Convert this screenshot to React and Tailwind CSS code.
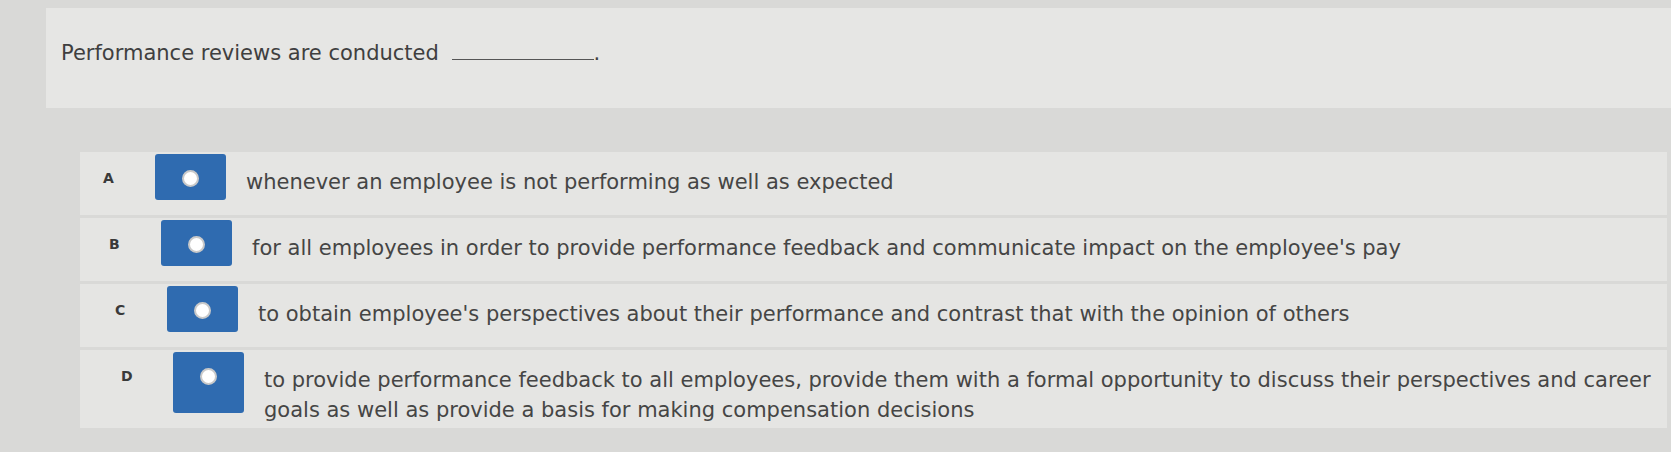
const options = [
  {
    letter: "A",
    text: "whenever an employee is not performing as well as expected",
    shift: "ml-0",
  },
  {
    letter: "B",
    text: "for all employees in order to provide performance feedback and communicate impact on the employee's pay",
    shift: "ml-[6px]",
  },
  {
    letter: "C",
    text: "to obtain employee's perspectives about their performance and contrast that with the opinion of others",
    shift: "ml-[12px]",
  },
  {
    letter: "D",
    text: "to provide performance feedback to all employees, provide them with a formal opportunity to discuss their perspectives and career goals as well as provide a basis for making compensation decisions",
    shift: "ml-[18px]",
  },
];

export default function App() {
  return (
    <div
      className="w-[1671px] h-[452px] bg-[#d9d9d7] overflow-hidden pt-[8px]"
      style={{ fontFamily: '"DejaVu Sans", Verdana, sans-serif' }}
    >
      <div className="ml-[46px] h-[100px] bg-[#e6e6e4] pl-[15px] pt-[30px]">
        <p className="text-[21px] text-[#3f3f3f]">
          Performance reviews are conducted{" "}
          <span className="inline-block ml-[6px] w-[142px] border-b border-[#555] align-baseline"></span>
          .
        </p>
      </div>

      <div className="ml-[80px] mr-[4px] mt-[44px] flex flex-col gap-[3px]">
        {options.map((o) => (
          <OptionRow key={o.letter} {...o} />
        ))}
      </div>
    </div>
  );
}

function OptionRow({ letter, text, shift }) {
  return (
    <div className="bg-[#e5e5e3] min-h-[63px] flex">
      <div className={`flex items-start min-w-0 ${shift}`}>
        <span className="w-[75px] shrink-0 pl-[23px] pt-[19px] text-[14px] leading-none font-bold text-[#3a3a3a]">
          {letter}
        </span>
        <div className="w-[71px] shrink-0 self-stretch mt-[2px] mb-[15px] bg-[#2f6bb0] rounded-[3px] flex justify-center pt-[16px]">
          <span className="w-[17px] h-[17px] rounded-full bg-white border-[2px] border-[#c9c9c9]"></span>
        </div>
        <p className="pl-[20px] pt-[15px] pb-[3px] text-[21px] leading-[30px] text-[#454545]">
          {text}
        </p>
      </div>
    </div>
  );
}
